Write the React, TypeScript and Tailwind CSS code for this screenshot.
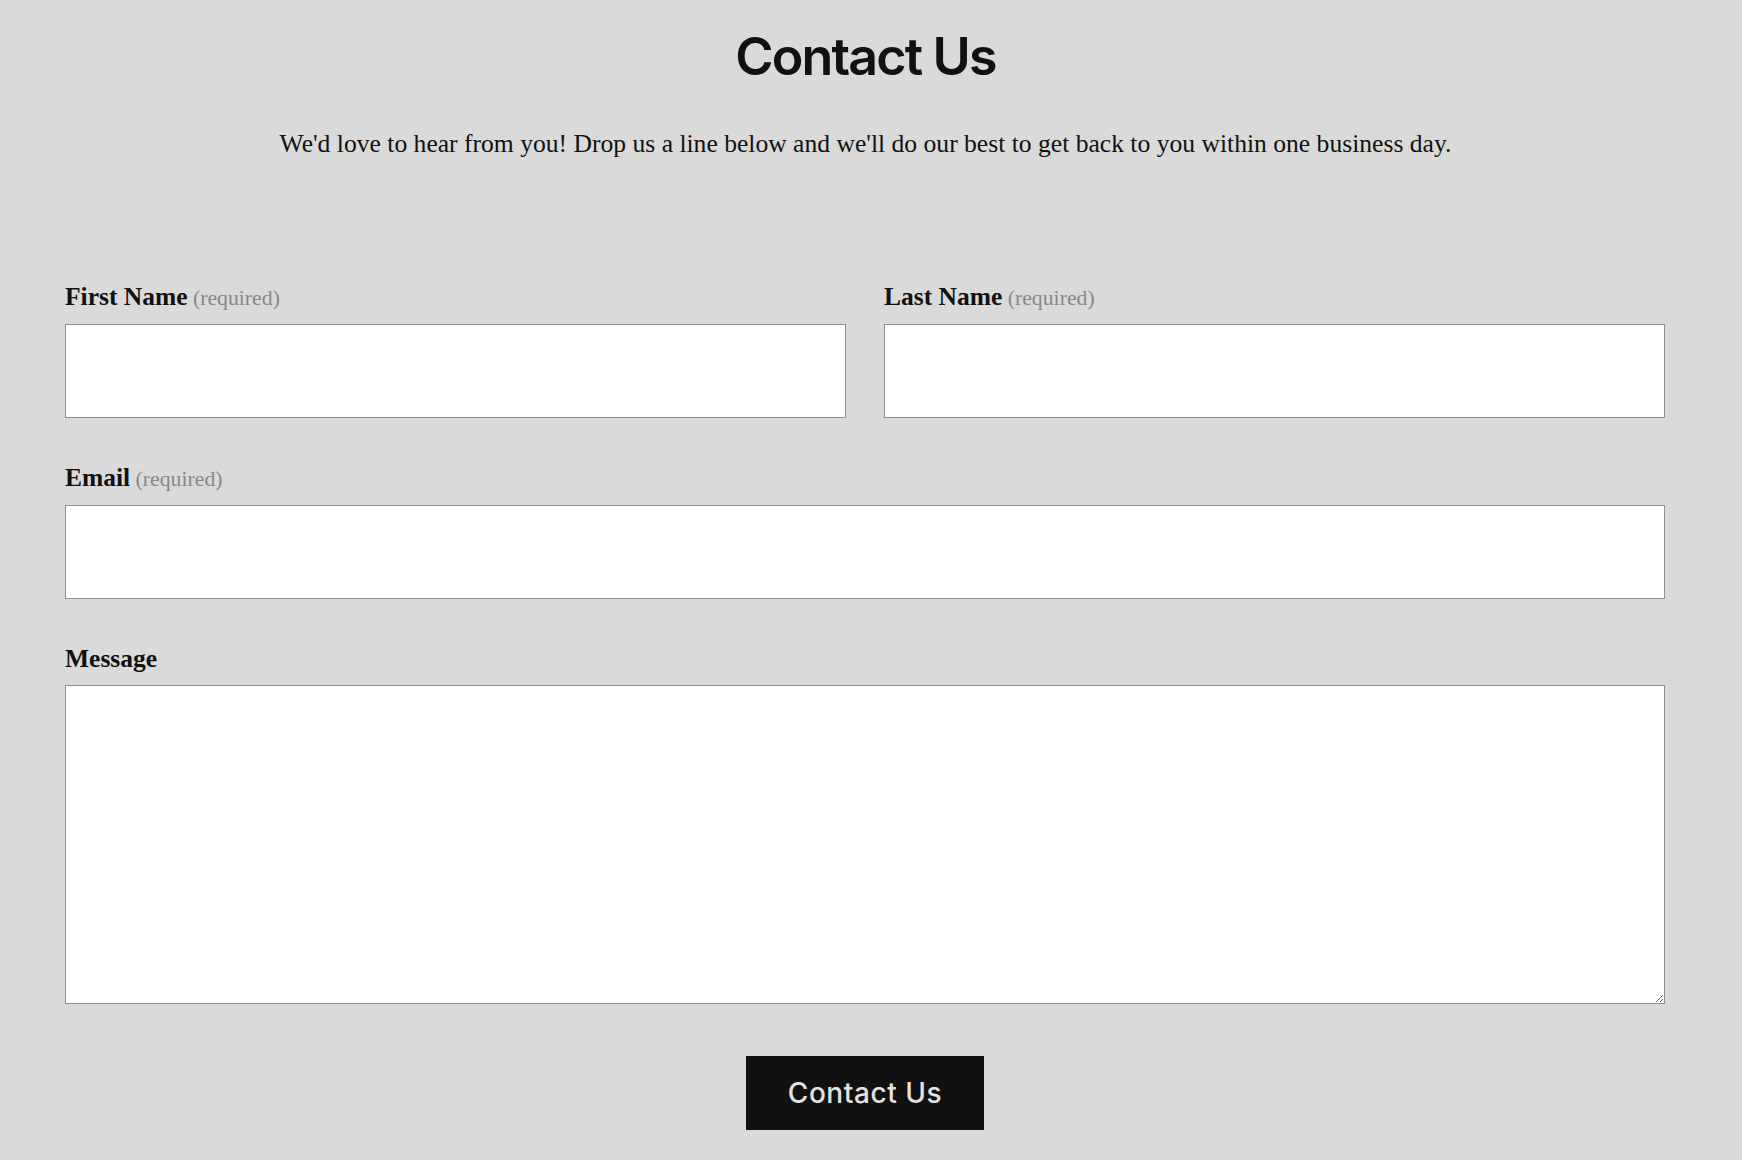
import React from "react";

function Label({ text, required }: { text: string; required?: boolean }) {
  return (
    <label className="block mb-[11px] text-[25.5px] leading-[30px] font-bold text-[#111111] font-['Liberation_Serif',serif]">
      <span>{text}</span>
      {required && (
        <span className="font-normal text-[21.75px] text-[#888888]"> (required)</span>
      )}
    </label>
  );
}

export default function App() {
  return (
    <div className="min-h-[1160px] w-full bg-[#dadada] font-['Liberation_Serif',serif]">
      <div className="w-[1731px] pt-[27px] flex flex-col items-center">
        <h1 className="font-['Inter',sans-serif] font-semibold text-[52px] leading-[60px] tracking-[-0.035em] text-[#111111]">
          Contact Us
        </h1>
        <p className="mt-[41px] text-[25.6px] leading-[32px] text-[#111111]">
          We'd love to hear from you! Drop us a line below and we'll do our best to get back to you within one business day.
        </p>
      </div>
      <form className="ml-[65px] w-[1600px] mt-[122px] flex flex-col" onSubmit={(e) => e.preventDefault()}>
        <div className="flex gap-[38px]">
          <div className="flex-1 flex flex-col">
            <Label text="First Name" required />
            <input className="h-[94px] w-full bg-white border border-[#8f8f8f] outline-none" />
          </div>
          <div className="flex-1 flex flex-col">
            <Label text="Last Name" required />
            <input className="h-[94px] w-full bg-white border border-[#8f8f8f] outline-none" />
          </div>
        </div>
        <div className="mt-[45px] flex flex-col">
          <Label text="Email" required />
          <input className="h-[94px] w-full bg-white border border-[#8f8f8f] outline-none" />
        </div>
        <div className="mt-[45px] flex flex-col">
          <Label text="Message" />
          <textarea className="h-[319px] w-full bg-white border border-[#8f8f8f] outline-none block" />
        </div>
        <div className="mt-[52px] flex justify-center">
          <button
            type="submit"
            className="w-[238px] h-[74px] bg-[#111111] text-[#e2e2e2] font-['Inter',sans-serif] font-medium text-[28px] tracking-[0.02em]"
          >
            Contact Us
          </button>
        </div>
      </form>
    </div>
  );
}
